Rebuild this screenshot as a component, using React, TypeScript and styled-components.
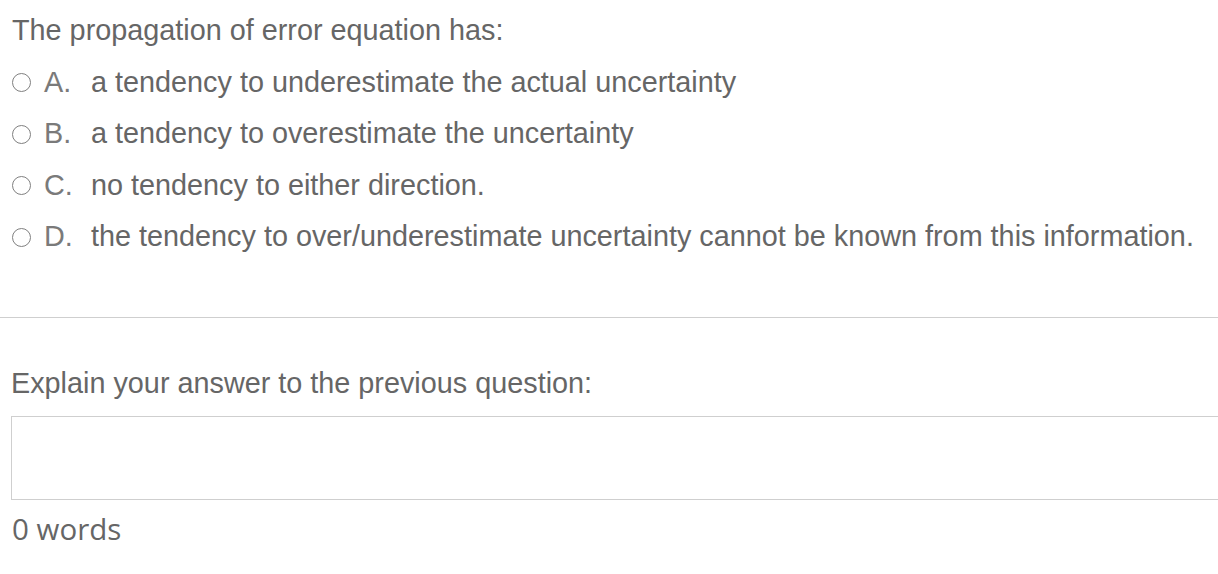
import styled, { createGlobalStyle } from 'styled-components';

const GlobalStyle = createGlobalStyle`
  html, body {
    margin: 0;
    padding: 0;
    background: #fff;
  }
  body {
    font-family: "Liberation Sans", Arial, sans-serif;
    color: #666;
  }
`;

const Page = styled.div`
  display: flex;
  flex-direction: column;
  width: 1218px;
  overflow: hidden;
`;

const QuestionBlock = styled.div`
  display: flex;
  flex-direction: column;
  padding: 12px 0 0 12px;
`;

const Prompt = styled.div<{ $gap?: number }>`
  font-size: 28.8px;
  line-height: 36px;
  color: #666;
  white-space: nowrap;
  margin-bottom: ${(p) => p.$gap ?? 16}px;
`;

const OptionList = styled.div`
  display: flex;
  flex-direction: column;
  gap: 15.5px;
`;

const OptionRow = styled.label`
  display: flex;
  align-items: center;
  height: 36px;
  font-size: 28.8px;
  cursor: pointer;
`;

const Radio = styled.span`
  box-sizing: border-box;
  width: 19px;
  height: 19px;
  border: 1.3px solid #808080;
  border-radius: 50%;
  flex-shrink: 0;
  margin-right: 13px;
  margin-top: 1px;
`;

const Letter = styled.span`
  width: 47px;
  color: #7a7a7a;
  flex-shrink: 0;
`;

const OptionText = styled.span`
  color: #666;
  white-space: nowrap;
`;

const Divider = styled.hr`
  width: 100%;
  height: 1px;
  border: 0;
  background: #cfcfcf;
  margin: 62px 0 0 0;
`;

const EssayBlock = styled.div`
  display: flex;
  flex-direction: column;
  padding: 47px 0 12px 11px;
`;

const AnswerBox = styled.textarea`
  box-sizing: border-box;
  width: 1220px;
  height: 84px;
  border: 1px solid #cfcfcf;
  border-radius: 0;
  resize: none;
  outline: none;
  padding: 8px;
  font: inherit;
`;

const WordCount = styled.div`
  font-family: "Open Sans", Lato, sans-serif;
  font-size: 29.5px;
  line-height: 42px;
  color: #666;
  margin-top: 8px;
  padding-left: 1px;
`;

const options = [
  { letter: 'A.', text: 'a tendency to underestimate the actual uncertainty' },
  { letter: 'B.', text: 'a tendency to overestimate the uncertainty' },
  { letter: 'C.', text: 'no tendency to either direction.' },
  {
    letter: 'D.',
    text: 'the tendency to over/underestimate uncertainty cannot be known from this information.',
  },
];

const App = () => {
  return (
    <Page>
      <GlobalStyle />
      <QuestionBlock>
        <Prompt>The propagation of error equation has:</Prompt>
        <OptionList>
          {options.map((o) => (
            <OptionRow key={o.letter}>
              <Radio />
              <Letter>{o.letter}</Letter>
              <OptionText>{o.text}</OptionText>
            </OptionRow>
          ))}
        </OptionList>
      </QuestionBlock>
      <Divider />
      <EssayBlock>
        <Prompt $gap={15}>Explain your answer to the previous question:</Prompt>
        <AnswerBox />
        <WordCount>0 words</WordCount>
      </EssayBlock>
    </Page>
  );
};

export default App;
